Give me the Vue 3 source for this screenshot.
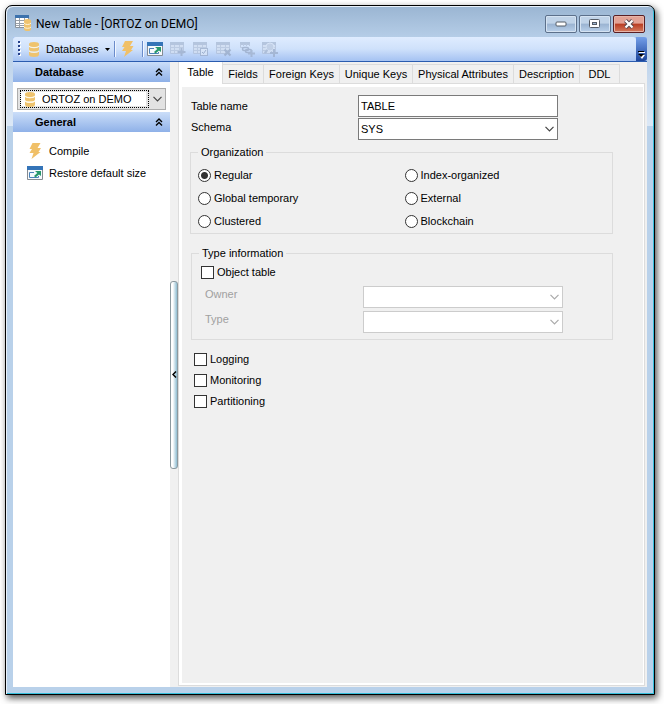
<script setup>
import { ref } from 'vue'

const tabs = ['Table', 'Fields', 'Foreign Keys', 'Unique Keys', 'Physical Attributes', 'Description', 'DDL']
const activeTab = ref('Table')
const tableName = ref('TABLE')
const schema = ref('SYS')
const organizations = ['Regular', 'Index-organized', 'Global temporary', 'External', 'Clustered', 'Blockchain']
const organization = ref('Regular')
const objectTable = ref(false)
const options = ref([
  { label: 'Logging', on: false },
  { label: 'Monitoring', on: false },
  { label: 'Partitioning', on: false }
])
const tableTools = [
  { name: 'Add field', badge: 'plus' },
  { name: 'Edit field', badge: 'check' },
  { name: 'Drop field', badge: 'cross' },
  { name: 'Add foreign key', badge: 'link' },
  { name: 'Add index', badge: 'round' }
]
</script>

<template>
  <div class="desktop">
    <svg class="defs" width="0" height="0" aria-hidden="true">
      <symbol id="i-db" viewBox="0 0 12 15">
        <g fill="#efc36e">
          <path d="M1 2Q1 0 6 0T11 2V3Q11 5 6 5T1 3Z" />
          <path d="M1 5Q6 7.500 11 5V7.500Q11 9.500 6 9.500T1 7.500Z" />
          <path d="M1 9.700Q6 12.200 11 9.700V12.500Q11 15 6 15T1 12.500Z" />
        </g>
        <path d="M1 4.200Q2 5.600 6 5.600T11 4.200M1 8.900Q2 10.300 6 10.300T11 8.900" fill="none" stroke="#fff5dc" stroke-width="1" />
      </symbol>
      <symbol id="i-bolt" viewBox="0 0 13 16">
        <path d="M4 0H12L9 5H12.500L10 9H12L3 16L5 10H1L3.500 6H1Z" fill="#f0c068" />
      </symbol>
      <symbol id="i-window" viewBox="0 0 16 14">
        <path d="M0.500 0.500H15.500V13.500H0.500Z" fill="#f6f9fc" stroke="#858b92" />
        <path d="M0 0H16V4H0Z" fill="#3474b8" />
        <path d="M7 6.500H2.500V11.500H11.500V10" fill="none" stroke="#4b82b8" />
        <path d="M8 5H14V10L12 8.500L8.500 11.500L7 10L10.300 7Z" fill="#27976b" />
      </symbol>
      <symbol id="i-chevron" viewBox="0 0 9 6">
        <path d="M0.500 0.800L4.500 4.800L8.500 0.800" fill="none" stroke="currentColor" stroke-width="1.200" />
      </symbol>
      <symbol id="i-collapse" viewBox="0 0 8 8">
        <path d="M1 4L4 1L7 4M1 7.500L4 4.500L7 7.500" fill="none" stroke="#000" stroke-width="1.400" />
      </symbol>
    </svg>

    <main class="window">
      <header class="titlebar">
        <svg class="app-icon" width="17" height="16" viewBox="0 0 17 16" aria-hidden="true">
          <path d="M0.500 0.500H13.500V12.500H0.500Z" fill="#fff" stroke="#8b929b" />
          <path d="M0 0H14V3H0Z" fill="#3c72ad" />
          <path d="M1 5.500H13M1 8.500H13M1 10.500H9M4.500 3V12M9.500 3V12" stroke="#9aa1aa" fill="none" />
          <path d="M9 6Q9 4 12.500 4T16 6V14Q16 16 12.500 16T9 14Z" fill="#efc36e" />
          <path d="M9 8Q10 9.500 12.500 9.500T16 8M9 12Q10 13.300 12.500 13.300T16 12" fill="none" stroke="#fff5dc" />
        </svg>
        <h1>New Table - [ORTOZ on DEMO]</h1>
        <div class="caption-buttons">
          <button type="button" aria-label="Minimize">
            <svg width="12" height="6" viewBox="0 0 12 6"><rect x="1" y="1" width="10" height="4" rx="1" fill="#fff" stroke="#555c66" /></svg>
          </button>
          <button type="button" aria-label="Maximize">
            <svg width="12" height="10" viewBox="0 0 12 10">
              <rect x="0.500" y="0.500" width="10" height="8" rx="1" fill="#fff" stroke="#555c66" />
              <rect x="3.500" y="3.500" width="4" height="2" fill="#9fb6d3" stroke="#555c66" />
            </svg>
          </button>
          <button type="button" class="close" aria-label="Close">
            <svg width="12" height="10" viewBox="0 0 12 10">
              <path d="M2.500 1.500L9.500 8.500M9.500 1.500L2.500 8.500" stroke="#574950" stroke-width="4" />
              <path d="M2.500 1.500L9.500 8.500M9.500 1.500L2.500 8.500" stroke="#fff" stroke-width="2.200" />
            </svg>
          </button>
        </div>
      </header>

      <div class="client">
        <div class="toolbar" role="toolbar" aria-label="Table tools">
          <div class="tools">
            <svg class="grip" width="4" height="16" viewBox="0 0 4 16" aria-hidden="true">
              <path d="M1 1h2v2h-2zM1 5h2v2h-2zM1 9h2v2h-2zM1 13h2v2h-2z" fill="#fff" />
              <path d="M0 0h2v2h-2zM0 4h2v2h-2zM0 8h2v2h-2zM0 12h2v2h-2z" fill="#27418b" />
            </svg>
            <button type="button" class="databases">
              <svg width="12" height="15"><use href="#i-db" /></svg>
              <span>Databases</span>
              <svg width="5" height="3" viewBox="0 0 5 3"><path d="M0 0H5L2.500 3Z" fill="#000" /></svg>
            </button>
            <span class="separator"></span>
            <button type="button" aria-label="Compile table"><svg width="13" height="16"><use href="#i-bolt" /></svg></button>
            <span class="separator"></span>
            <button type="button" aria-label="Restore size"><svg width="16" height="14"><use href="#i-window" /></svg></button>
            <button v-for="tool in tableTools" :key="tool.name" type="button" disabled :aria-label="tool.name">
              <svg width="16" height="16" viewBox="0 0 16 16" fill="none">
                <g v-if="tool.badge === 'link'">
                  <path d="M1 1H11V4H1Z" fill="#a9bad4" />
                  <path d="M1.500 3V6.500H4M10.500 3V5M4.500 3V5M7.500 3V5" stroke="#b1c0d8" />
                  <rect x="3.500" y="6.500" width="6" height="3" rx="1.500" stroke="#98a9c5" stroke-width="1.500" />
                  <rect x="6.500" y="8.500" width="6" height="3" rx="1.500" stroke="#98a9c5" stroke-width="1.500" />
                  <path d="M12.500 9V16M9 12.500H16" stroke="#9fb0cb" stroke-width="2" />
                </g>
                <g v-else>
                  <path d="M0.500 1.500H13.500V12.500H0.500Z" fill="#d2def0" stroke="#b0bfd8" />
                  <path d="M0 1H14V4H0Z" fill="#a9bad4" />
                  <path d="M1 6.500H13M1 9.500H13M4.500 4V12M9.500 4V12" stroke="#b4c3da" />
                  <path v-if="tool.badge === 'plus'" d="M11.500 7V15M7.500 11H15.500" stroke="#9cadc9" stroke-width="2" />
                  <template v-if="tool.badge === 'check'">
                    <rect x="7.500" y="7.500" width="7" height="7" fill="#dce7f7" stroke="#9cadc9" />
                    <path d="M9 11L10.500 12.500L13 9" stroke="#8fa2c1" />
                  </template>
                  <path v-if="tool.badge === 'cross'" d="M8.500 8.500L14.500 14.500M14.500 8.500L8.500 14.500" stroke="#98a9c5" stroke-width="2.200" />
                  <template v-if="tool.badge === 'round'">
                    <circle cx="8" cy="6" r="4" fill="#bccae0" stroke="#d7e3f5" />
                    <path d="M5.500 9L2.500 12" stroke="#a5b5cf" stroke-width="2" />
                    <path d="M12 8V16M8 12H16" stroke="#9cadc9" stroke-width="2" />
                  </template>
                </g>
              </svg>
            </button>
          </div>
          <button type="button" class="overflow" aria-label="Toolbar options">
            <svg width="7" height="8" viewBox="0 0 7 8">
              <path d="M1 1H7V2H1ZM1 4H7L4 8Z" fill="#fff" />
              <path d="M0 0H6V1H0ZM0 3H6L3 6Z" fill="#000" />
            </svg>
          </button>
        </div>

        <div class="body">
          <aside class="sidebar">
            <button type="button" class="section-head">Database<svg width="8" height="8"><use href="#i-collapse" /></svg></button>
            <div class="connection">
              <div class="combo">
                <svg class="connection-icon" width="12" height="15"><use href="#i-db" /></svg>
                <select aria-label="Database connection"><option>ORTOZ on DEMO</option></select>
                <svg class="arrow" width="9" height="6"><use href="#i-chevron" /></svg>
              </div>
            </div>
            <button type="button" class="section-head">General<svg width="8" height="8"><use href="#i-collapse" /></svg></button>
            <nav class="actions">
              <a href="#compile"><svg width="16" height="16"><use href="#i-bolt" /></svg>Compile</a>
              <a href="#restore"><svg width="16" height="14"><use href="#i-window" /></svg>Restore default size</a>
            </nav>
          </aside>

          <div class="splitter">
            <button type="button" aria-label="Collapse side panel">
              <svg width="5" height="7" viewBox="0 0 5 7"><path d="M4 0.500L1 3.500L4 6.500" fill="none" stroke="#000" stroke-width="1.500" /></svg>
            </button>
          </div>

          <section class="editor">
            <div class="tabs" role="tablist">
              <button
                v-for="tab in tabs"
                :key="tab"
                type="button"
                role="tab"
                :aria-selected="activeTab === tab"
                :class="{ active: activeTab === tab }"
                @click="activeTab = tab"
              >{{ tab }}</button>
            </div>
            <form class="page" @submit.prevent>
              <div class="main-fields">
                <label for="table-name">Table name</label>
                <label for="schema">Schema</label>
                <div class="controls">
                  <input id="table-name" v-model="tableName" type="text">
                  <div class="combo">
                    <select id="schema" v-model="schema"><option>SYS</option></select>
                    <svg class="arrow" width="9" height="6"><use href="#i-chevron" /></svg>
                  </div>
                </div>
              </div>

              <fieldset class="organization">
                <legend>Organization</legend>
                <div class="radios">
                  <label v-for="kind in organizations" :key="kind">
                    <input v-model="organization" type="radio" name="organization" :value="kind">{{ kind }}
                  </label>
                </div>
              </fieldset>

              <fieldset class="type-info">
                <legend>Type information</legend>
                <label class="check"><input v-model="objectTable" type="checkbox">Object table</label>
                <div class="type-fields" :class="{ off: !objectTable }">
                  <label for="owner">Owner</label>
                  <div class="combo">
                    <select id="owner" :disabled="!objectTable"></select>
                    <svg class="arrow" width="9" height="6"><use href="#i-chevron" /></svg>
                  </div>
                  <label for="type">Type</label>
                  <div class="combo">
                    <select id="type" :disabled="!objectTable"></select>
                    <svg class="arrow" width="9" height="6"><use href="#i-chevron" /></svg>
                  </div>
                </div>
              </fieldset>

              <div class="options">
                <label v-for="option in options" :key="option.label" class="check">
                  <input v-model="option.on" type="checkbox">{{ option.label }}
                </label>
              </div>
            </form>
          </section>
        </div>
      </div>
    </main>
  </div>
</template>

<style>
body {
  background: #fff;
}
</style>

<style scoped>
* {
  box-sizing: border-box;
}

.desktop {
  display: flex;
  min-height: 100vh;
  padding: 5px 9px 9px 5px;
  font: 11px/14px "Liberation Sans", Arial, sans-serif;
  color: #000;
}

.defs {
  position: absolute;
}

button,
input,
select {
  margin: 0;
  padding: 0;
  border: 0;
  border-radius: 0;
  background: none;
  font: inherit;
  color: inherit;
  appearance: none;
}

svg {
  display: block;
  flex: none;
}

.window {
  display: flex;
  flex-direction: column;
  flex: 1;
  min-width: 0;
  padding: 0 7px 7px;
  border: 1px solid #000;
  border-radius: 7px 7px 0 0;
  background:
    linear-gradient(#9ab5d2, #b5cde7) 0 0 / 100% 31px no-repeat,
    linear-gradient(#b5cde7, #dce8f6) 0 31px / 100% 89px no-repeat,
    #b9d1ea;
  box-shadow: inset 1px 1px 0 #e8f1fa, inset -1px -1px 0 #35bfdc, 2px 3px 7px rgba(0, 0, 0, 0.7);
}

.titlebar {
  display: flex;
  align-items: center;
  gap: 4px;
  height: 31px;
  padding: 5px 2px 0;
}

.app-icon {
  margin-bottom: 2px;
}

h1 {
  flex: 1;
  margin: 0;
  font: 12px/16px Roboto, "Open Sans", sans-serif;
}

.caption-buttons {
  display: flex;
  gap: 2px;
}

.caption-buttons button {
  display: flex;
  align-items: center;
  justify-content: center;
  width: 32px;
  height: 18px;
  border: 1px solid #5c708b;
  border-radius: 2px;
  background: linear-gradient(#c0d3e8 45%, #9ab3d1 50%, #b9d0ea);
  box-shadow: inset 0 0 0 1px #d5e3f2;
}

.caption-buttons .close {
  border-color: #5a1f24;
  background: linear-gradient(#e3a295 45%, #b93c22 50%, #d57c60);
  box-shadow: inset 0 0 0 1px #e7b5a9;
}

.client {
  display: flex;
  flex-direction: column;
  flex: 1;
  background: #f0f0f0;
}

.toolbar {
  display: flex;
  height: 25px;
  border-bottom: 1px solid #2b5caf;
  background: #a5c2f2;
}

.tools {
  display: flex;
  align-items: center;
  flex: 1;
  padding: 0 5px;
  border-radius: 3px 3px 3px 0;
  background: linear-gradient(#dfecff, #cfe1fb 50%, #a5c2f2);
}

.tools button {
  display: flex;
  align-items: center;
  justify-content: center;
  width: 23px;
  height: 22px;
}

.tools button:disabled {
  opacity: 0.75;
}

.tools .databases {
  justify-content: flex-start;
  gap: 6px;
  width: auto;
  padding: 0 1px 0 6px;
}

.separator {
  width: 2px;
  height: 16px;
  margin-left: 3px;
  border-left: 1px solid #6a8ccb;
  border-right: 1px solid #f1f6ff;
}

.overflow {
  display: flex;
  align-items: flex-end;
  justify-content: center;
  width: 11px;
  padding-bottom: 2px;
  border-radius: 0 3px 3px 0;
  background: linear-gradient(#749fe9, #1c459b);
}

.body {
  display: flex;
  flex: 1;
}

.sidebar {
  width: 157px;
  background: #fff;
}

.section-head {
  display: flex;
  align-items: center;
  justify-content: space-between;
  width: 100%;
  height: 20px;
  padding: 0 7px 0 22px;
  background: linear-gradient(#cbdef9, #8fb1e8);
  font-weight: 700;
}

.connection {
  padding: 6px 4px 2px;
}

.combo {
  display: grid;
  align-items: center;
}

.combo > * {
  grid-area: 1 / 1;
}

.combo .arrow {
  justify-self: end;
  margin-right: 4px;
  color: #444;
  pointer-events: none;
  z-index: 1;
}

.connection-icon {
  margin-left: 7px;
  z-index: 1;
}

.connection select {
  width: 100%;
  height: 22px;
  padding-left: 24px;
  border: 1px solid #adadad;
  background:
    linear-gradient(#fff, #fff) 3px 3px / 125px 14px no-repeat,
    #e3e3e3;
}

.connection .combo::after {
  grid-area: 1 / 1;
  width: 127px;
  height: 16px;
  margin-left: 3px;
  border: 1px dotted #000;
  content: "";
  pointer-events: none;
}

.actions {
  display: flex;
  flex-direction: column;
  gap: 6px;
  padding: 11px 14px;
}

.actions a {
  display: flex;
  align-items: center;
  gap: 6px;
  height: 16px;
  color: #000;
  text-decoration: none;
}

.splitter {
  display: flex;
  align-items: center;
  width: 8px;
}

.splitter button {
  display: flex;
  align-items: center;
  width: 8px;
  height: 188px;
  padding-left: 1px;
  border: 1px solid #8c999f;
  border-radius: 3px;
  background: linear-gradient(90deg, #fff 30%, #8fbdd2);
}

.editor {
  display: flex;
  flex-direction: column;
  flex: 1;
  padding: 0 2px 1px 0;
}

.tabs {
  display: grid;
  grid-template-columns: 45px 41px 76px 73px 101px 66px 40px;
  align-items: end;
  height: 22px;
  box-shadow: inset 0 -1px 0 #dcdcdc;
}

.tabs button {
  height: 20px;
  border: 1px solid #dcdcdc;
  border-width: 1px 1px 1px 0;
  white-space: nowrap;
}

.tabs .active {
  height: 22px;
  padding-bottom: 2px;
  border-width: 0 1px 0 1px;
  background: #fff;
}

.page {
  flex: 1;
  padding: 11px 31px 11px 11px;
  border: 1px solid #dcdcdc;
  border-top: 0;
  background: #f0f0f0;
  box-shadow: inset 3px 3px 0 #fff, inset -1px -2px 0 #fff;
}

.main-fields {
  display: grid;
  grid-template-columns: 168px 200px;
  grid-template-rows: 21px 21px;
  align-items: center;
}

.main-fields > label {
  grid-column: 1;
  padding-left: 1px;
}

.controls {
  display: grid;
  grid-area: 1 / 2 / 3 / 3;
  align-self: start;
  gap: 1px;
}

.page input[type="text"],
.page select {
  width: 100%;
  height: 22px;
  padding: 0 2px;
  border: 1px solid #7a7a7a;
  background: #fff;
  opacity: 1;
}

fieldset {
  min-width: 0;
  margin: 0;
  padding: 0;
  border: 1px solid #dcdcdc;
}

legend {
  margin-left: 7px;
  padding: 0 3px;
}

.organization {
  margin-top: 8px;
}

.radios {
  display: grid;
  grid-template-columns: 1fr 1fr;
  gap: 7px 0;
  padding: 8px 1px 4px 7px;
}

.radios label,
.check {
  display: flex;
  align-items: center;
  gap: 3px;
  height: 16px;
}

.page input[type="radio"],
.page input[type="checkbox"] {
  width: 13px;
  height: 13px;
  border: 1px solid #333;
  background: #fff;
}

.page input[type="radio"] {
  border-radius: 50%;
}

.page input[type="radio"]:checked {
  background: radial-gradient(circle, #333 3px, #fff 4px);
}

.page input[type="checkbox"]:checked {
  box-shadow: inset 0 0 0 2px #fff;
  background: #333;
}

.type-info {
  margin: 12px 0 0 1px;
}

.type-info .check {
  margin: 4px 0 0 9px;
}

.type-fields {
  display: grid;
  grid-template-columns: 158px 200px;
  gap: 3px 0;
  padding: 6px 0 6px 13px;
}

.type-fields > label {
  padding-top: 1px;
}

.type-fields.off label {
  color: #a0a0a0;
}

.type-fields.off select {
  border-color: #ccc;
}

.type-fields.off .arrow {
  color: #aaa;
}

.options {
  display: grid;
  gap: 5px;
  margin-top: 11px;
  padding-left: 4px;
}
</style>
